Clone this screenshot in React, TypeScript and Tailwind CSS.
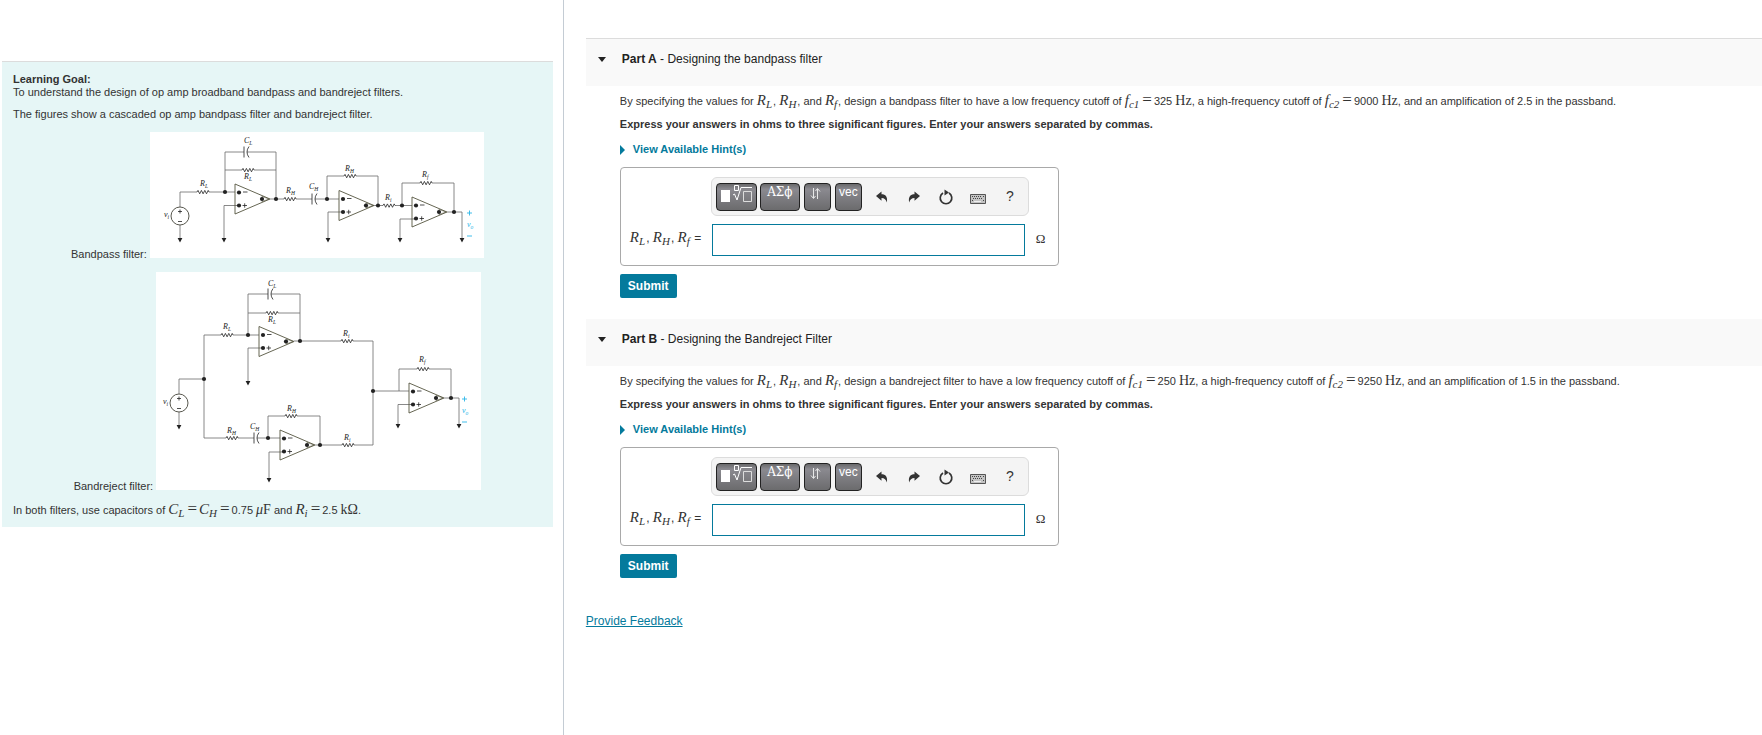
import { useState } from "react"
import type { ReactNode } from "react"

type Point = { x: number; y: number }

const WIRE = "#6b6b6b"
const INK = "#222222"
const CYAN = "#2bb5e8"

function Dot({ x, y }: Point) {
  return <circle cx={x} cy={y} r={2.1} fill={INK} />
}

function Wire({ d }: { d: string }) {
  return <path d={d} fill="none" stroke={WIRE} strokeWidth={0.8} />
}

function GroundArrow({ x, y }: Point) {
  return <path d={`M${x - 2.4} ${y - 4}h4.8l-2.4 4.4z`} fill={INK} />
}

function Resistor({ x, y }: Point) {
  return (
    <g fill="none">
      <path d={`M${x} ${y}h12`} stroke="#fff" strokeWidth={2} />
      <path
        d={`M${x} ${y}l1 -1.6l1.7 3.4l1.7 -3.4l1.7 3.4l1.7 -3.4l1.7 3.4l1.7 -3.4l0.8 1.6`}
        stroke={INK}
        strokeWidth={0.8}
      />
    </g>
  )
}

function Capacitor({ x, y }: Point) {
  return (
    <g fill="none">
      <path d={`M${x} ${y}h3`} stroke="#fff" strokeWidth={2} />
      <path d={`M${x} ${y - 5.5}v11M${x + 5} ${y - 5.5}q-4 5.5 0 11`} stroke={INK} strokeWidth={0.8} />
    </g>
  )
}

function Label({ x, y, name, sub, color = INK }: Point & { name: string; sub: string; color?: string }) {
  return (
    <text x={x} y={y} fill={color} fontSize={8} fontStyle="italic" fontFamily="'Liberation Serif', serif">
      {name}
      <tspan dy={1.5} fontSize={5.5}>
        {sub}
      </tspan>
    </text>
  )
}

// x is the flat side, y the height of the output
function OpAmp({ x, y }: Point) {
  return (
    <g fill="none">
      <path d={`M${x} ${y - 15}v30l35 -15z`} stroke="#55553f" strokeWidth={0.9} />
      <path d={`M${x + 27} ${y - 2.6}l7 2.6l-7 2.6z`} stroke="#55553f" strokeWidth={0.6} />
      <path
        d={`M${x + 8} ${y - 7}h4.5M${x + 7.5} ${y + 6.5}h4.5M${x + 9.7} ${y + 4.3}v4.4`}
        stroke={INK}
        strokeWidth={0.8}
      />
      <Dot x={x + 4} y={y - 6.5} />
      <Dot x={x + 4} y={y + 6.5} />
      <Dot x={x + 27} y={y} />
    </g>
  )
}

function Source({ x, y }: Point) {
  return (
    <g fill="none">
      <circle cx={x} cy={y} r={9} fill="#fff" stroke="#44443a" strokeWidth={0.9} />
      <path d={`M${x - 2} ${y - 4.5}h4M${x} ${y - 6.5}v4M${x - 2} ${y + 5.5}h4`} stroke={INK} strokeWidth={0.8} />
      <Label x={x - 16} y={y + 1} name="v" sub="i" />
    </g>
  )
}

function Output({ x, y }: Point) {
  return (
    <g fill="none">
      <path d={`M${x} ${y}h5M${x + 2.5} ${y - 2.5}v5M${x} ${y + 23}h5`} stroke={CYAN} strokeWidth={0.9} />
      <Label x={x} y={y + 14} name="v" sub="o" color={CYAN} />
    </g>
  )
}

function BandpassCircuit() {
  return (
    <svg className="inline-block bg-white align-baseline" width={334} height={126} role="img" aria-label="Bandpass filter circuit">
      <Wire d="M30 75V60H85M75 60V20H126V67M75 38H126M89 73.5H74V108M30 93V108" />
      <Wire d="M120 67H189M177 67V44H228V73M192 80H178V108" />
      <Wire d="M223 73.5H262M252 73V51H304V80M265 87H250V108M297 80H312V108" />
      <Source x={30} y={84} />
      <Resistor x={47} y={60} />
      <Resistor x={92} y={38} />
      <Capacitor x={94} y={20} />
      <OpAmp x={85} y={67} />
      <Resistor x={134} y={67} />
      <Capacitor x={162} y={67} />
      <Resistor x={194} y={44} />
      <OpAmp x={189} y={73.5} />
      <Resistor x={233} y={73.5} />
      <Resistor x={270} y={51} />
      <OpAmp x={262} y={80} />
      <Dot x={75} y={60} />
      <Dot x={126} y={67} />
      <Dot x={177} y={67} />
      <Dot x={228} y={73.5} />
      <Dot x={252} y={73.5} />
      <Dot x={304} y={80} />
      <GroundArrow x={30} y={110} />
      <GroundArrow x={74} y={110} />
      <GroundArrow x={178} y={110} />
      <GroundArrow x={250} y={110} />
      <GroundArrow x={312} y={110} />
      <Label x={94} y={11} name="C" sub="L" />
      <Label x={94} y={47} name="R" sub="L" />
      <Label x={50} y={54} name="R" sub="L" />
      <Label x={136} y={61} name="R" sub="H" />
      <Label x={159} y={57} name="C" sub="H" />
      <Label x={195} y={39} name="R" sub="H" />
      <Label x={235} y={68} name="R" sub="i" />
      <Label x={272} y={45} name="R" sub="f" />
      <Output x={317} y={81} />
    </svg>
  )
}

function BandrejectCircuit() {
  return (
    <svg className="inline-block bg-white align-baseline" width={325} height={218} role="img" aria-label="Bandreject filter circuit">
      <Wire d="M23 122V107H48M48 63V166H124M48 63H103M92 63V22H144V69M92 41H144M107 76H92V112M23 140V155" />
      <Wire d="M138 69H217V173H159M112 166V144H164V173M128 180H113V208" />
      <Wire d="M217 119H253M243 119V97H295V126M257 132.5H242V154M288 126H303V154" />
      <Source x={23} y={131} />
      <Resistor x={65} y={63} />
      <Resistor x={110} y={41} />
      <Capacitor x={112} y={22} />
      <OpAmp x={103} y={69.5} />
      <Resistor x={185} y={69} />
      <Resistor x={70} y={166} />
      <Capacitor x={98} y={166} />
      <Resistor x={129} y={144} />
      <OpAmp x={124} y={173} />
      <Resistor x={186} y={173} />
      <Resistor x={261} y={97} />
      <OpAmp x={253} y={126} />
      <Dot x={48} y={107} />
      <Dot x={92} y={63} />
      <Dot x={144} y={69} />
      <Dot x={112} y={166} />
      <Dot x={164} y={173} />
      <Dot x={217} y={119} />
      <Dot x={295} y={126} />
      <GroundArrow x={23} y={157} />
      <GroundArrow x={92} y={113} />
      <GroundArrow x={113} y={210} />
      <GroundArrow x={242} y={156} />
      <GroundArrow x={303} y={156} />
      <Label x={112} y={14} name="C" sub="L" />
      <Label x={112} y={50} name="R" sub="L" />
      <Label x={67} y={57} name="R" sub="L" />
      <Label x={71} y={161} name="R" sub="H" />
      <Label x={94} y={157} name="C" sub="H" />
      <Label x={131} y={139} name="R" sub="H" />
      <Label x={187} y={64} name="R" sub="i" />
      <Label x={188} y={168} name="R" sub="i" />
      <Label x={263} y={90} name="R" sub="f" />
      <Output x={306} y={127} />
    </svg>
  )
}

// Maths spans have no line height of their own, so they never push text lines apart
function Sym({ name, sub }: { name: string; sub: string }) {
  return (
    <i className="mr-px font-['Liberation_Serif',serif] text-[15px] leading-[0]">
      {name}
      <sub className="text-[11px] leading-[0]">{sub}</sub>
    </i>
  )
}

function Rm({ children }: { children: ReactNode }) {
  return <span className="font-['Liberation_Serif',serif] text-[14px] leading-[0]">{children}</span>
}

function Eq() {
  return <span className="mx-0.5 font-['Liberation_Serif',serif] text-[17px] leading-[0]">=</span>
}

const padButton =
  "flex h-7 items-start justify-center rounded border border-[#222] bg-linear-to-b from-[#6a6a6c] via-[#8b8a90] via-20% to-[#6b6b6d] text-white"
const iconButton = "flex h-8 w-8 items-center justify-center text-[#333]"

function Toolbar() {
  return (
    <div className="flex h-[39px] items-center rounded-md border border-[#dcdcdc] bg-[#f4f4f4] pl-1">
      <div className="flex gap-[3px]">
        <button className={`${padButton} w-[41px]`} aria-label="Templates">
          <svg width={39} height={26} fill="none" stroke="#fff">
            <path d="M4 6h9v12h-9z" fill="#fff" stroke="none" />
            <path d="M17.500 1.500h4v5h-4zM16 11l1.500 -1l2.500 6l4 -12.500h11" />
            <path d="M26.500 7.500h8v10h-8z" stroke="#ddd" />
          </svg>
        </button>
        <button className={`${padButton} w-10 font-['DejaVu_Serif',serif] text-[12px] leading-4`}>ΑΣϕ</button>
        <button className={`${padButton} ml-px w-[27px]`} aria-label="Arrows">
          <svg width={25} height={26} fill="none" stroke="#e8e8e8">
            <path d="M8.500 4v10M6 11.500l2.500 3l2 -2.500M12.500 15v-10M10.500 7l2 -2.500l2.500 3" />
          </svg>
        </button>
        <button className={`${padButton} ml-px w-[27px] text-[12px] leading-4`}>vec</button>
      </div>
      <div className="ml-1 flex">
        <button className={iconButton} aria-label="Undo">
          <svg width={14} height={14} viewBox="0 0 14 14">
            <path d="M1 6l5.500 -4.500v2.700c4 0 6.500 2.500 5.300 8.300c-0.800 -3 -2.300 -4.500 -5.300 -4.500v2.700z" fill="currentColor" />
          </svg>
        </button>
        <button className={iconButton} aria-label="Redo">
          <svg width={14} height={14} viewBox="0 0 14 14">
            <path d="M13 6l-5.500 -4.500v2.700c-4 0 -6.500 2.500 -5.300 8.300c0.800 -3 2.300 -4.500 5.300 -4.500v2.700z" fill="currentColor" />
          </svg>
        </button>
        <button className={iconButton} aria-label="Reset">
          <svg width={16} height={16} viewBox="0 0 16 16" fill="none">
            <path d="M11 4a5.800 5.800 0 1 1 -6 0" stroke="currentColor" strokeWidth={1.700} />
            <path d="M6.500 0.500l4.500 3l-4.500 3z" fill="currentColor" />
          </svg>
        </button>
        <button className={iconButton} aria-label="Keyboard">
          <svg className="mt-1" width={16} height={10} viewBox="0 0 16 10" fill="none">
            <path d="M0.500 0.500h15v9h-15z" fill="#c4c4c4" stroke="#555" />
            <path d="M2 2.500h9M3 4.500h9M2 6.500h1M4 7.500h7M13 2.500h1M13 6.500h1" stroke="#444" strokeDasharray="1 1" />
            <path d="M4 7.500h7" stroke="#eee" />
          </svg>
        </button>
        <button className={`${iconButton} text-[14px]`} aria-label="Help">
          ?
        </button>
      </div>
    </div>
  )
}

type PartProps = {
  id: string
  title: string
  kind: string
  low: string
  high: string
  gain: string
}

function Part({ id, title, kind, low, high, gain }: PartProps) {
  const [answer, setAnswer] = useState("")

  return (
    <section className="mb-[21px]">
      <h2 className="flex h-[47px] items-start bg-[#f9f9f9] pt-3 text-[12px] leading-4 text-[#222]">
        <button className="flex items-center">
          <svg className="ml-3" width={8} height={5}>
            <path d="M0 0h8l-4 5z" fill="#222" />
          </svg>
          <span className="ml-4 whitespace-pre">
            <span className="font-semibold">Part {id}</span> - {title}
          </span>
        </button>
      </h2>
      <div className="pl-[34px]">
        <p className="mt-[7px] leading-4">
          By specifying the values for <Sym name="R" sub="L" />, <Sym name="R" sub="H" />, and <Sym name="R" sub="f" />,
          design a {kind} filter to have a low frequency cutoff of <Sym name="f" sub="c1" />
          <Eq />
          {low} <Rm>Hz</Rm>, a high-frequency cutoff of <Sym name="f" sub="c2" />
          <Eq />
          {high} <Rm>Hz</Rm>, and an amplification of {gain} in the passband.
        </p>
        <p className="mt-[9px] font-bold">
          Express your answers in ohms to three significant figures. Enter your answers separated by commas.
        </p>
        <button className="mt-3 flex items-center gap-2 text-[11px] leading-[13px] font-bold text-[#047a9c]">
          <svg width={5} height={10}>
            <path d="M0 0l5 5l-5 5z" fill="currentColor" />
          </svg>
          View Available Hint(s)
        </button>
        <div className="mt-[11px] flex h-[99px] w-[439px] rounded border border-[#a9a9a9] pt-[9px]">
          <label
            htmlFor={`answer-${id}`}
            className="mt-[55px] w-[90px] shrink-0 pl-[9px] text-[12px] whitespace-nowrap"
          >
            <Sym name="R" sub="L" />, <Sym name="R" sub="H" />, <Sym name="R" sub="f" /> =
          </label>
          <div className="w-[318px] shrink-0">
            <Toolbar />
            <div className="mt-2 flex items-center">
              <input
                id={`answer-${id}`}
                className="ml-px h-8 w-[313px] shrink-0 border border-[#047a9c] bg-white px-2 text-[14px] outline-none"
                value={answer}
                onChange={(e) => setAnswer(e.target.value)}
              />
              <span className="mb-1 ml-[11px] font-['Liberation_Serif',serif] text-[13px]">Ω</span>
            </div>
          </div>
        </div>
        <button className="mt-2 h-6 rounded-[2px] bg-[#047a9c] px-2 text-[12px] font-bold text-white">
          Submit
        </button>
      </div>
    </section>
  )
}

export default function App() {
  return (
    <div className="flex min-h-screen bg-white font-['Liberation_Sans',Arial,sans-serif] text-[11px] leading-[13px] text-[#333]">
      <aside className="w-[32%] shrink-0 border-r border-[#c4ccd4] pt-[61px] pr-[10px] pl-0.5">
        <div className="border-t border-[#dcdcdc] bg-[#e6f6f6] px-[11px] pt-[11px] pb-[9px]">
          <h1 className="font-bold">Learning Goal:</h1>
          <p>To understand the design of op amp broadband bandpass and bandreject filters.</p>
          <p className="mt-[9px]">The figures show a cascaded op amp bandpass filter and bandreject filter.</p>
          <p className="mt-[11px] text-center">
            Bandpass filter: <BandpassCircuit />
          </p>
          <p className="mt-[11px] text-center">
            Bandreject filter: <BandrejectCircuit />
          </p>
          <p className="mt-[9px] leading-4">
            In both filters, use capacitors of <Sym name="C" sub="L" />
            <Eq />
            <Sym name="C" sub="H" />
            <Eq />
            0.75 <Rm>
              <i>μ</i>F
            </Rm>{" "}
            and <Sym name="R" sub="i" />
            <Eq />
            2.5 <Rm>kΩ</Rm>.
          </p>
        </div>
      </aside>
      <main className="min-w-0 grow pt-[38px] pl-[22px]">
        <div className="border-t border-[#dcdcdc]">
          <Part id="A" title="Designing the bandpass filter" kind="bandpass" low="325" high="9000" gain="2.5" />
          <Part id="B" title="Designing the Bandreject Filter" kind="bandreject" low="250" high="9250" gain="1.5" />
        </div>
        <a href="#feedback" className="mt-3.5 inline-block text-[12px] leading-4 text-[#047a9c] underline">
          Provide Feedback
        </a>
      </main>
    </div>
  )
}
